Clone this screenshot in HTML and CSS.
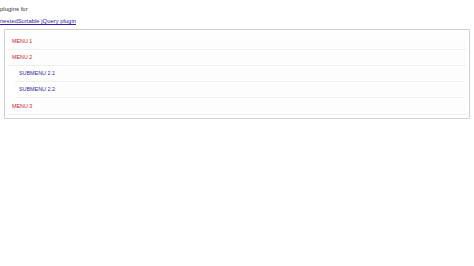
FILE: index.html
```html
<!DOCTYPE html>
<html>
<head>
<meta charset="utf-8">
<link rel="stylesheet" href="styles.css">
</head>
<body>
<p class="intro">plugins for</p>
<p class="links"><a href="#">nestedSortable jQuery plugin</a></p>
<div class="box">
  <ol class="menu">
    <li><div class="row top">MENU 1</div></li>
    <li><div class="row top">MENU 2</div>
      <ol class="sub">
        <li><div class="row subrow">SUBMENU 2.1</div></li>
        <li><div class="row subrow">SUBMENU 2.2</div></li>
      </ol>
    </li>
    <li><div class="row top last">MENU 3</div></li>
  </ol>
</div>
</body>
</html>
```
FILE: styles.css
```css
html, body {
  margin: 0;
  padding: 0;
  background: #fff;
}
body {
  font-family: "Liberation Sans", Arial, sans-serif;
}
.intro {
  margin: 0;
  padding-top: 6px;
  font-size: 6px;
  line-height: 7px;
  color: #333;
}
.links {
  margin: 5px 0 0 0;
  font-size: 5.9px;
  line-height: 7px;
}
.links a {
  color: #2e22a8;
  text-decoration: underline;
}
.box {
  margin: 4px 4px 0 4px;
  height: 84px;
  border: 1px solid #d0d0d0;
  border-radius: 1px;
  box-shadow: 0 0 1px #e0e0e0;
  padding: 4px 3px 0 3px;
}
.menu, .sub {
  list-style: none;
  margin: 0;
  padding: 0;
}
.sub {
  margin: 0 2px 0 7px;
}
.row {
  height: 15px;
  line-height: 15px;
  font-size: 5.4px;
  padding-left: 4px;
  border-bottom: 1px solid #f0f0f0;
  background: linear-gradient(#fff, #fcfcfc);
}
.top {
  color: #c3262b;
}
.subrow {
  color: #2c2ca0;
}
.last {
  margin-top: 1px;
}
```
